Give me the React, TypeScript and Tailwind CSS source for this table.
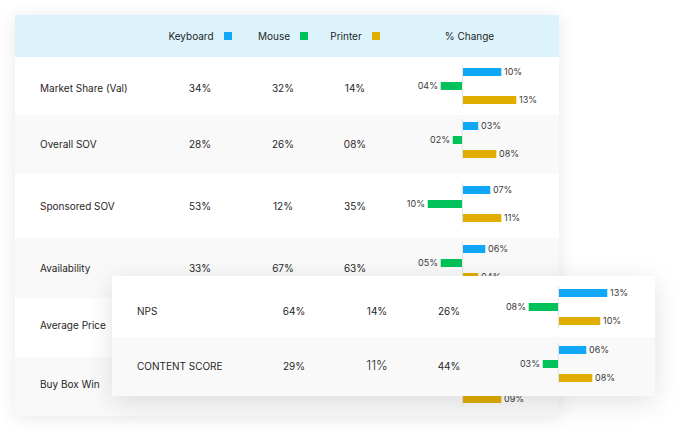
import React from "react";

const BLUE = "bg-[#10a7f6]";
const GREEN = "bg-[#00c15a]";
const YELLOW = "bg-[#e0ad00]";

interface Row {
  label: string;
  vals: [string, string, string];
  blue: [number, string];
  green: [number, string];
  yellow: [number, string];
  h: string;
  alt: boolean;
  shift?: string; // nudges the bars up a little
  textPad?: string;
  bigMid?: boolean;
}

const MAIN_ROWS: Row[] = [
  { label: "Market Share (Val)", vals: ["34%", "32%", "14%"], blue: [39, "10%"], green: [22, "04%"], yellow: [54, "13%"], h: "h-[58px]", alt: false, textPad: "pt-[4px]" },
  { label: "Overall SOV", vals: ["28%", "26%", "08%"], blue: [16, "03%"], green: [10, "02%"], yellow: [34, "08%"], h: "h-[59px]", alt: true, shift: "pb-[10px]" },
  { label: "Sponsored SOV", vals: ["53%", "12%", "35%"], blue: [28, "07%"], green: [35, "10%"], yellow: [39, "11%"], h: "h-[64px]", alt: false, shift: "pb-[4px]" },
  { label: "Availability", vals: ["33%", "67%", "63%"], blue: [23, "06%"], green: [22, "05%"], yellow: [16, "04%"], h: "h-[60px]", alt: true, shift: "pb-[10px]" },
  { label: "Average Price", vals: ["41%", "22%", "17%"], blue: [20, "05%"], green: [16, "03%"], yellow: [28, "07%"], h: "h-[59px]", alt: false, textPad: "pb-[5px]" },
  { label: "Buy Box Win", vals: ["58%", "19%", "23%"], blue: [31, "08%"], green: [12, "02%"], yellow: [39, "09%"], h: "h-[59px]", alt: true, shift: "pb-[3px]", textPad: "pb-[4px]" },
];

const OVERLAY_ROWS: Row[] = [
  { label: "NPS", vals: ["64%", "14%", "26%"], blue: [49, "13%"], green: [30, "08%"], yellow: [42, "10%"], h: "h-[61px]", alt: false, textPad: "pt-[10px]" },
  { label: "CONTENT SCORE", vals: ["29%", "11%", "44%"], blue: [28, "06%"], green: [16, "03%"], yellow: [34, "08%"], h: "h-[59px]", alt: true, shift: "pb-[5px]", bigMid: true },
];

function Bar({ w, color, text, left }: { w: number; color: string; text: string; left?: boolean }) {
  return (
    <div className={`flex items-center h-[8px] gap-[2px] leading-[8px] ${left ? "justify-end" : ""}`}>
      {left && <span className="text-[9px] text-[#3a3a3a]">{text}</span>}
      <div className={`h-[8px] ${color} ${left ? "border-l" : "border-r"} border-white/70`} style={{ width: w }} />
      {!left && <span className="text-[9px] text-[#3a3a3a]">{text}</span>}
    </div>
  );
}

function Chart({ row, leftW }: { row: Row; leftW: string }) {
  return (
    <div className={`grid ${leftW} items-center h-full ${row.shift ?? ""}`}>
      <Bar w={row.green[0]} color={GREEN} text={row.green[1]} left />
      <div className="h-[42px] border-l border-[#e4e4e4] flex flex-col justify-center gap-[20px]">
        <Bar w={row.blue[0]} color={BLUE} text={row.blue[1]} />
        <Bar w={row.yellow[0]} color={YELLOW} text={row.yellow[1]} />
      </div>
    </div>
  );
}

function TableRow({ row, cols, leftW }: { row: Row; cols: string; leftW: string }) {
  const pad = row.textPad ?? "";
  return (
    <div className={`grid ${cols} ${row.h} ${row.alt ? "bg-[#f9f9f9]" : "bg-white"} items-center text-[10px] text-[#262626]`}>
      <div className={`pl-[25px] ${pad}`}>{row.label}</div>
      <div className={`text-center ${pad}`}>{row.vals[0]}</div>
      <div className={`text-center ${pad} ${row.bigMid ? "text-[12.5px] font-light" : ""}`}>{row.vals[1]}</div>
      <div className={`text-center ${pad}`}>{row.vals[2]}</div>
      <Chart row={row} leftW={leftW} />
    </div>
  );
}

function Legend({ name, color }: { name: string; color: string }) {
  return (
    <div className="flex items-center justify-center gap-[10px]">
      <span>{name}</span>
      <span className={`w-[8px] h-[8px] ${color}`} />
    </div>
  );
}

export default function App() {
  return (
    <div className="relative w-[694px] h-[435px] bg-white overflow-hidden pt-[15px] pl-[15px] font-['Inter',sans-serif]">
      <div className="w-[544px] bg-white shadow-[0_2px_18px_rgba(0,0,0,0.09)]">
        <div className="grid grid-cols-[145px_80px_86px_58px_1fr] h-[42px] items-center bg-[#dcf3fc] text-[10px] text-[#262626]">
          <div />
          <Legend name="Keyboard" color={BLUE} />
          <Legend name="Mouse" color={GREEN} />
          <Legend name="Printer" color={YELLOW} />
          <div className="text-center pr-[4px]">% Change</div>
        </div>
        {MAIN_ROWS.map((r) => (
          <TableRow key={r.label} row={r} cols="grid-cols-[145px_80px_86px_58px_1fr]" leftW="grid-cols-[78px_1fr]" />
        ))}
      </div>

      <div className="absolute left-[112px] top-[276px] w-[543px] bg-white shadow-[0_6px_26px_rgba(0,0,0,0.12)]">
        {OVERLAY_ROWS.map((r) => (
          <TableRow key={r.label} row={r} cols="grid-cols-[142px_80px_86px_58px_1fr]" leftW="grid-cols-[80px_1fr]" />
        ))}
      </div>
    </div>
  );
}
